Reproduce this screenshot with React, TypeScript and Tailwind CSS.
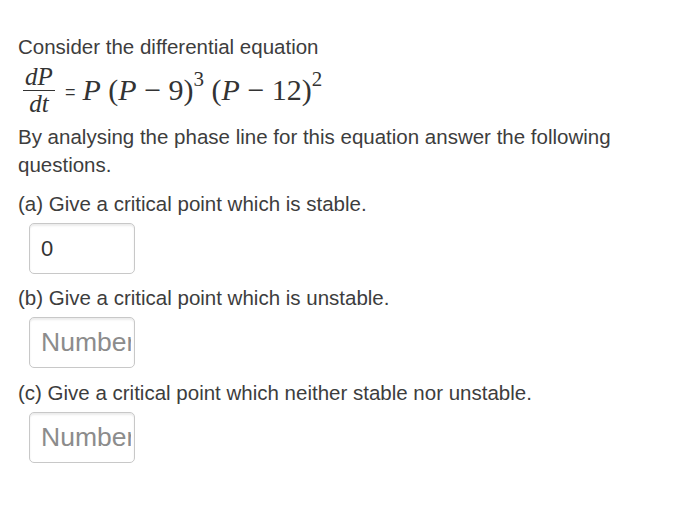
export default function App() {
  const serif = "font-['Liberation_Serif','Times_New_Roman',serif]";
  return (
    <div className="w-[700px] h-[515px] bg-white pl-[18px] pt-[33px] font-['Liberation_Sans',Arial,sans-serif] text-[20.5px] leading-[27px] text-[#3d3d3d]">
      <p>Consider the differential equation</p>

      <div className={`flex items-center mt-[5px] h-[52px] text-[#333] ${serif}`}>
        <div className="flex flex-col items-center ml-[3px] w-[36px]">
          <span className="italic text-[25px] leading-[22px] pb-[2px] px-[2px] border-b-[1.5px] border-[#333]">dP</span>
          <span className="italic text-[25px] leading-[24px] pt-[1px]">dt</span>
        </div>
        <span className="font-['Liberation_Sans',Arial,sans-serif] text-[18px] ml-[8px] mr-[7px] mt-[2px]">=</span>
        <span className="text-[30px] leading-none -mt-[3px] whitespace-nowrap">
          <i>P</i> (<i>P</i> − 9)<sup className="text-[21px] top-[-14px]">3</sup> (<i>P</i> − 12)<sup className="text-[21px] top-[-14px]">2</sup>
        </span>
      </div>

      <p className="mt-[6px] leading-[28px]">
        By analysing the phase line for this equation answer the following
        <br />
        questions.
      </p>

      <p className="mt-[11px]">(a) Give a critical point which is stable.</p>
      <Field value="0" />

      <p className="mt-[10px]">(b) Give a critical point which is unstable.</p>
      <Field />

      <p className="mt-[11px]">(c) Give a critical point which neither stable nor unstable.</p>
      <Field />
    </div>
  );
}

function Field({ value }: { value?: string }) {
  return (
    <div className="ml-[11px] mt-[6px] w-[106px] h-[51px] rounded-[5px] border border-[#c8c8c8] shadow-[inset_0_2px_2px_rgba(0,0,0,0.08)] flex items-center pl-[11px] pr-[3px]">
      <div className="overflow-hidden">
        {value ? (
          <span className="text-[22px] text-[#333]">{value}</span>
        ) : (
          <span className="text-[26.5px] text-[#8c8c8c] whitespace-nowrap">Number</span>
        )}
      </div>
    </div>
  );
}
